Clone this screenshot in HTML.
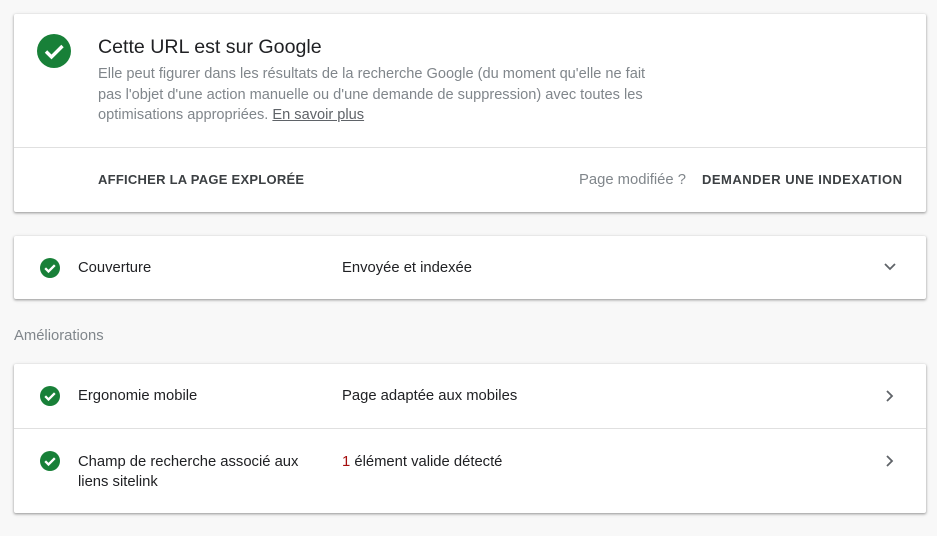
<!DOCTYPE html>
<html><head><meta charset="utf-8"><style>
body{margin:0;background:#f8f8f8;font-family:"Liberation Sans",Roboto,sans-serif;width:937px;height:536px;position:relative;overflow:hidden;color:#212121}
.card{position:absolute;left:14px;width:912px;background:#fff;border-radius:2px;box-shadow:0 1px 2px rgba(0,0,0,.3),0 1px 3px 1px rgba(0,0,0,.1)}
.abs{position:absolute;white-space:nowrap}
.btn{font-size:13px;font-weight:bold;letter-spacing:.25px;color:#3c4043}
.row{font-size:14.8px;color:#202124}
</style></head><body>
<div class="card" style="top:14px;height:198px">
 <svg class="abs" style="left:23px;top:20px" width="34" height="34" viewBox="0 0 34 34"><circle cx="17" cy="17" r="17" fill="#188038"/><path d="M9 17.5l5.5 5.5 11-11" stroke="#fff" stroke-width="3.4" fill="none"/></svg>
 <div class="abs" style="left:84px;top:22px;font-size:19.6px;color:#202124">Cette URL est sur Google</div>
 <div class="abs" style="left:84px;top:50px;font-size:14.6px;line-height:20.5px;color:#80868b;white-space:normal;width:565px">Elle peut figurer dans les résultats de la recherche Google (du moment qu'elle ne fait pas l'objet d'une action manuelle ou d'une demande de suppression) avec toutes les optimisations appropriées. <span style="text-decoration:underline;color:#5f6368">En savoir plus</span></div>
 <div class="abs" style="left:0;top:133px;width:912px;height:1px;background:#e0e0e0"></div>
 <div class="abs btn" style="left:84px;top:158px">AFFICHER LA PAGE EXPLORÉE</div>
 <div class="abs" style="left:565px;top:158px;font-size:14.8px;color:#80868b">Page modifiée ?</div>
 <div class="abs btn" style="left:688px;top:158px;letter-spacing:.5px">DEMANDER UNE INDEXATION</div>
</div>
<div class="card" style="top:236px;height:63px">
 <svg class="abs" style="left:26px;top:22px" width="20" height="20" viewBox="0 0 20 20"><circle cx="10" cy="10" r="10" fill="#188038"/><path d="M5.2 10.2l3.3 3.3 6.3-6.3" stroke="#fff" stroke-width="2.3" fill="none"/></svg>
 <div class="abs row" style="left:64px;top:24px">Couverture</div>
 <div class="abs row" style="left:328px;top:24px">Envoyée et indexée</div>
 <svg class="abs" style="left:869px;top:26px" width="14" height="10" viewBox="0 0 14 10"><path d="M2 2l5 5 5-5" stroke="#5f6368" stroke-width="1.8" fill="none"/></svg>
</div>
<div class="abs" style="left:14px;top:328px;font-size:14.8px;color:#80868b">Améliorations</div>
<div class="card" style="top:364px;height:149px">
 <svg class="abs" style="left:26px;top:22px" width="20" height="20" viewBox="0 0 20 20"><circle cx="10" cy="10" r="10" fill="#188038"/><path d="M5.2 10.2l3.3 3.3 6.3-6.3" stroke="#fff" stroke-width="2.3" fill="none"/></svg>
 <div class="abs row" style="left:64px;top:24px">Ergonomie mobile</div>
 <div class="abs row" style="left:328px;top:24px">Page adaptée aux mobiles</div>
 <svg class="abs" style="left:871px;top:25px" width="10" height="14" viewBox="0 0 10 14"><path d="M2 2l5 5-5 5" stroke="#5f6368" stroke-width="1.8" fill="none"/></svg>
 <div class="abs" style="left:0;top:64px;width:912px;height:1px;background:#e0e0e0"></div>
 <svg class="abs" style="left:26px;top:87px" width="20" height="20" viewBox="0 0 20 20"><circle cx="10" cy="10" r="10" fill="#188038"/><path d="M5.2 10.2l3.3 3.3 6.3-6.3" stroke="#fff" stroke-width="2.3" fill="none"/></svg>
 <div class="abs row" style="left:64px;top:88px;line-height:20px">Champ de recherche associé aux<br>liens sitelink</div>
 <div class="abs row" style="left:328px;top:88px;line-height:20px"><span style="color:#a50e0e">1</span> élément valide détecté</div>
 <svg class="abs" style="left:871px;top:90px" width="10" height="14" viewBox="0 0 10 14"><path d="M2 2l5 5-5 5" stroke="#5f6368" stroke-width="1.8" fill="none"/></svg>
</div>
</body></html>
